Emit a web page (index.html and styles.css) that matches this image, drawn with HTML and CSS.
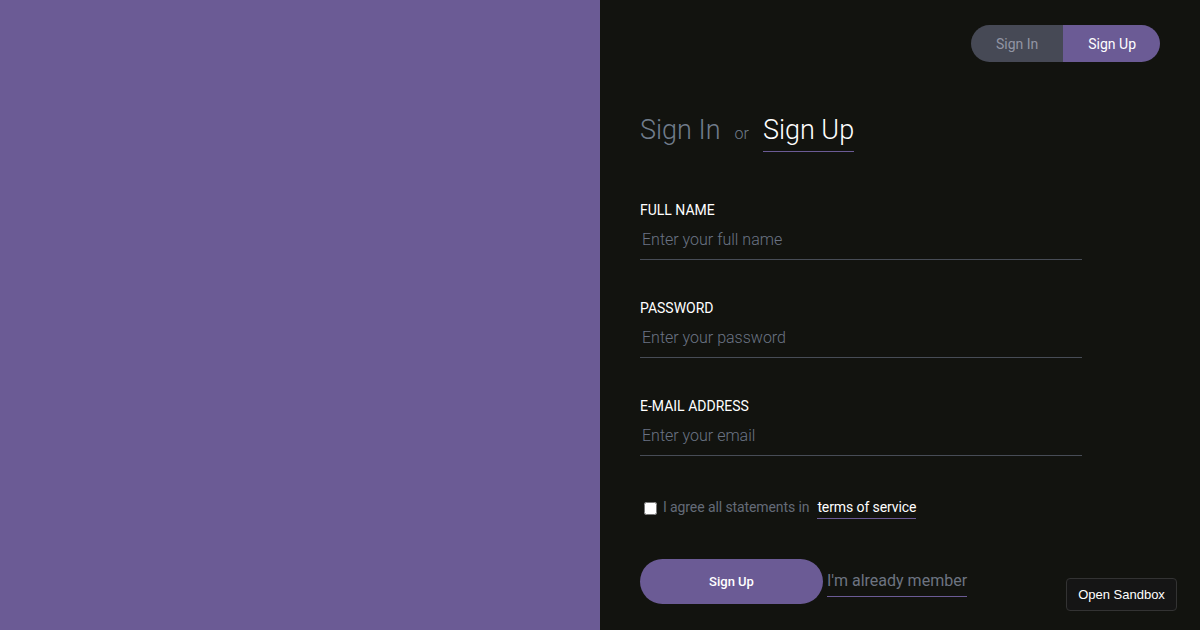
FILE: index.html
```html
<!DOCTYPE html>
<html>
<head>
<meta charset="utf-8">
<link rel="stylesheet" href="styles.css">
</head>
<body>
<div class="app">
  <div class="aside"></div>
  <div class="main">
    <div class="switcher-row">
      <div class="switcher">
        <a class="switch-item">Sign In</a>
        <a class="switch-item active">Sign Up</a>
      </div>
    </div>
    <div class="title">
      <a class="title-link">Sign In</a>
      <span class="title-or">or</span>
      <a class="title-link active">Sign Up</a>
    </div>
    <form class="form">
      <div class="field">
        <label class="label">Full Name</label>
        <input class="input" type="text" placeholder="Enter your full name">
      </div>
      <div class="field">
        <label class="label">Password</label>
        <input class="input" type="password" placeholder="Enter your password">
      </div>
      <div class="field last">
        <label class="label">E-mail Address</label>
        <input class="input" type="email" placeholder="Enter your email">
      </div>
      <div class="agree">
        <input class="check" type="checkbox">
        <span class="agree-text">I agree all statements in</span>
        <a class="terms">terms of service</a>
      </div>
      <div class="actions">
        <button class="btn" type="button">Sign Up</button>
        <a class="member">I'm already member</a>
      </div>
    </form>
  </div>
</div>
<a class="sandbox">Open Sandbox</a>
</body>
</html>
```
FILE: styles.css
```css
* { box-sizing: border-box; }
html, body { margin: 0; padding: 0; }
body {
  font-family: Roboto, "Liberation Sans", sans-serif;
  background: #12130f;
  width: 1200px;
  height: 630px;
  overflow: hidden;
}
.app {
  display: flex;
  height: 630px;
}
.aside {
  width: 600px;
  background: #6b5b95;
}
.main {
  flex: 1;
  background: #12130f;
  padding: 25px 40px 0 40px;
}
.switcher-row {
  display: flex;
  justify-content: flex-end;
}
.switcher {
  display: flex;
  border-radius: 25px;
  overflow: hidden;
  height: 37px;
}
.switch-item {
  display: flex;
  align-items: center;
  justify-content: center;
  padding: 0 25px;
  font-size: 14px;
  white-space: nowrap;
  color: #9295a4;
  background: #464955;
}
.switch-item.active {
  background: #6b5b95;
  color: #ffffff;
  padding: 0 24px 0 25px;
}
.title {
  margin-top: 52px;
  display: flex;
  align-items: baseline;
}
.title-link {
  font-size: 27px;
  font-weight: 300;
  color: #707c8b;
  line-height: 33px;
  padding-bottom: 4px;
  border-bottom: 1px solid transparent;
}
.title-link.active {
  color: #ffffff;
  border-bottom-color: #6b5b95;
}
.title-or {
  font-size: 16px;
  font-weight: 300;
  color: #707c8b;
  margin: 0 14px 0 14px;
}
.form {
  width: 85%;
  margin-top: 50px;
}
.field {
  margin-bottom: 40px;
}
.field.last {
  margin-bottom: 0;
}
.label {
  display: block;
  font-size: 14px;
  line-height: 16px;
  color: #ffffff;
  text-transform: uppercase;
  margin-bottom: 2px;
}
.input {
  display: block;
  width: 100%;
  background: transparent;
  border: none;
  border-bottom: 1px solid #474c56;
  outline: none;
  padding: 10px 0 10px 2px;
  font-family: Roboto, "Liberation Sans", sans-serif;
  font-size: 16px;
  font-weight: 300;
  line-height: 19px;
  height: 40px;
  color: #ffffff;
}
.input::placeholder {
  color: #6b7384;
}
.agree {
  margin-top: 43px;
  display: flex;
  align-items: baseline;
  font-size: 14px;
  letter-spacing: -0.1px;
}
.check {
  margin: 0 6px 0 4px;
  width: 13px;
  height: 13px;
  align-self: center;
  position: relative;
  top: -1px;
}
.agree-text {
  color: #646b78;
  line-height: 17px;
  margin-right: 8px;
}
.terms {
  color: #ffffff;
  line-height: 17px;
  padding-bottom: 2px;
  border-bottom: 1px solid #6b5b95;
}
.actions {
  margin-top: 40px;
  display: flex;
  align-items: flex-start;
}
.btn {
  width: 183px;
  height: 45px;
  border: none;
  border-radius: 25px;
  background: #6b5b95;
  color: #ffffff;
  font-family: Roboto, "Liberation Sans", sans-serif;
  font-size: 13px;
  font-weight: 500;
  padding: 0;
}
.member {
  margin-left: 4px;
  margin-top: 12px;
  font-size: 16px;
  line-height: 19px;
  color: #6d7481;
  padding-bottom: 6px;
  border-bottom: 1px solid #6b5b95;
}
.sandbox {
  position: fixed;
  right: 23px;
  bottom: 19px;
  width: 111px;
  height: 33px;
  display: flex;
  align-items: center;
  justify-content: center;
  background: #151515;
  border: 1px solid #333333;
  border-radius: 4px;
  color: #ffffff;
  font-family: "Liberation Sans", Arial, sans-serif;
  font-size: 13px;
}
```
